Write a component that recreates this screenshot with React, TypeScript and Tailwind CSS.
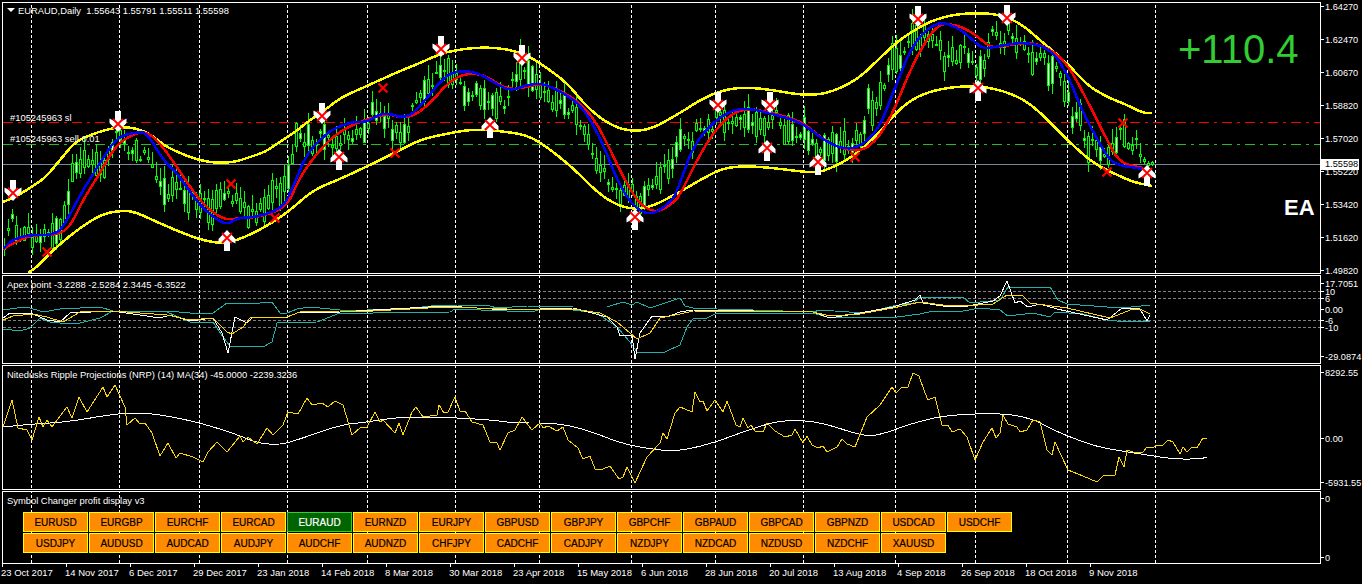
import React from "react";

type P = [number, number];
const GRID = [31, 119, 199, 287, 367, 455, 539, 631, 715, 803, 895, 975, 1067, 1155];

const upper: P[] = [[3,202],[15,197],[30,188],[45,178],[60,160],[75,142],[90,135],[105,130],[120,127],[135,128],[150,134],[165,146],[180,153],[195,159],[215,163],[235,162],[250,157],[265,152],[280,142],[295,132],[310,120],[325,110],[340,98],[360,89],[380,80],[400,71],[420,63],[433,57],[450,51],[480,47],[507,49],[527,55],[547,68],[567,83],[587,107],[607,123],[627,131],[650,130],[680,113],[700,100],[720,91],[743,87],[773,90],[800,95],[827,94],[857,80],[880,58],[897,42],[913,31],[933,20],[957,14],[983,13],[1000,15],[1020,23],[1040,40],[1067,63],[1087,85],[1107,97],[1127,105],[1143,113],[1152,113]];
const lower: P[] = [[28,273],[37,267],[53,250],[77,230],[100,215],[117,211],[133,211],[157,222],[187,235],[213,243],[233,242],[260,230],[287,213],[313,190],[340,179],[370,165],[400,150],[420,140],[440,135],[473,129],[500,131],[527,135],[547,147],[573,168],[600,195],[623,208],[647,209],[680,192],[700,180],[723,168],[747,166],[773,168],[813,173],[827,170],[853,157],[880,132],[900,108],[923,93],[957,86],[990,87],[1020,97],[1040,112],[1067,140],[1093,163],[1113,173],[1133,182],[1152,186]];
const red: P[] = [[3,249],[20,240],[33,235],[57,235],[70,227],[83,200],[100,173],[113,150],[123,140],[137,133],[147,132],[160,143],[177,167],[197,197],[213,213],[227,220],[240,218],[260,217],[287,207],[300,177],[317,153],[340,130],[383,113],[407,119],[427,107],[453,77],[480,72],[507,90],[527,87],[543,83],[573,97],[593,117],[607,143],[623,177],[640,205],[657,213],[673,203],[680,195],[697,160],[713,133],[730,115],[747,108],[773,113],[803,122],[820,137],[837,147],[860,152],[877,140],[893,113],[913,63],[937,23],[957,25],[973,33],[990,47],[1000,47],[1027,42],[1047,47],[1067,63],[1087,100],[1107,140],[1120,163],[1143,168]];
const blue: P[] = [[3,249],[12,240],[27,235],[57,235],[67,220],[83,190],[100,163],[117,137],[137,132],[147,133],[163,160],[177,173],[197,202],[213,217],[227,225],[237,218],[257,217],[283,208],[293,187],[307,153],[327,133],[340,126],[353,122],[367,122],[383,112],[407,119],[423,103],[443,78],[457,71],[477,72],[503,88],[513,90],[527,85],[543,83],[567,95],[583,108],[600,137],[620,187],[637,210],[653,215],[673,200],[680,183],[693,147],[710,125],[730,111],[747,108],[773,114],[803,123],[827,143],[853,151],[877,133],[893,93],[913,43],[937,21],[957,27],[973,40],[983,49],[1000,46],[1023,42],[1050,48],[1067,73],[1083,113],[1107,157],[1117,165],[1143,169]];
const guide: P[] = [[4,250],[12,212],[16,228],[20,236],[30,235],[50,236],[60,230],[65,215],[70,178],[80,165],[90,165],[100,170],[110,150],[118,130],[130,155],[145,155],[155,170],[165,190],[180,190],[195,200],[205,205],[215,205],[230,195],[235,195],[245,210],[255,210],[265,205],[272,190],[285,190],[290,165],[295,138],[305,140],[315,140],[325,135],[340,143],[347,133],[353,138],[367,127],[372,110],[380,108],[392,130],[400,137],[407,132],[412,107],[420,93],[427,95],[432,83],[440,65],[443,65],[452,80],[460,83],[463,97],[472,92],[480,93],[488,98],[492,105],[500,100],[507,100],[513,82],[520,72],[527,75],[535,82],[543,90],[548,97],[553,105],[560,105],[567,112],[575,115],[583,127],[588,140],[595,157],[603,173],[610,183],[617,190],[623,197],[632,190],[635,197],[643,200],[648,183],[657,177],[668,170],[675,153],[680,143],[692,140],[695,127],[703,130],[712,128],[717,113],[727,120],[735,127],[747,122],[752,130],[763,127],[768,120],[777,115],[780,130],[790,128],[803,132],[812,143],[823,154],[835,147],[850,148],[860,137],[863,127],[868,103],[875,110],[883,90],[892,63],[900,60],[912,40],[923,35],[933,38],[939,47],[943,65],[952,60],[963,47],[972,63],[976,75],[983,63],[992,27],[1003,43],[1007,28],[1012,37],[1023,50],[1028,57],[1032,57],[1043,55],[1047,67],[1052,70],[1060,77],[1063,88],[1068,100],[1072,117],[1080,120],[1083,133],[1087,143],[1095,147],[1100,150],[1107,157],[1115,147],[1119,133],[1123,130],[1127,140],[1132,142],[1135,142],[1139,147],[1143,158],[1147,164],[1152,163]];

const tealUp: P[] = [[3,310],[17,308],[27,307],[43,312],[60,309],[80,308],[100,307],[113,311],[167,311],[190,313],[213,313],[227,303],[260,303],[272,302],[280,313],[287,313],[297,309],[310,307],[340,310],[367,310],[413,308],[440,305],[457,305],[490,306],[497,308],[527,306],[573,307],[607,307],[623,302],[632,305],[637,302],[650,308],[680,298],[685,306],[693,308],[717,309],[753,310],[813,312],[820,310],[863,313],[877,310],[893,306],[913,303],[920,297],[963,297],[970,303],[1000,300],[1008,287],[1050,287],[1058,300],[1067,304],[1107,307],[1122,308],[1150,305]];
const tealLo: P[] = [[3,329],[20,331],[30,328],[40,318],[50,322],[60,323],[80,323],[100,318],[113,311],[167,312],[190,322],[213,322],[223,337],[230,346],[263,347],[272,342],[277,323],[317,322],[340,313],[373,313],[450,312],[455,309],[533,312],[540,309],[573,310],[597,313],[617,327],[630,342],[637,352],[665,352],[680,345],[687,327],[693,319],[707,318],[717,313],[813,313],[827,317],[897,317],[920,314],[933,311],[963,311],[980,308],[1000,310],[1008,316],[1033,313],[1050,317],[1055,312],[1083,314],[1107,320],[1127,322],[1150,321]];
const apexGold: P[] = [[3,320],[13,316],[33,314],[47,317],[63,322],[80,312],[113,311],[167,315],[190,320],[213,318],[227,332],[232,334],[243,327],[250,318],[287,317],[300,312],[340,311],[373,311],[447,307],[507,309],[573,309],[600,313],[617,322],[630,333],[637,339],[650,333],[660,318],[680,314],[693,311],[813,312],[830,316],[860,314],[893,308],[920,302],[943,305],[963,306],[993,304],[1007,295],[1022,295],[1030,303],[1067,308],[1110,318],[1133,309],[1142,310],[1150,314]];
const apexWhite: P[] = [[3,318],[10,313],[33,314],[47,320],[60,322],[70,313],[113,311],[160,318],[170,315],[190,321],[213,318],[222,333],[228,353],[235,317],[247,323],[253,317],[287,317],[300,312],[340,312],[373,310],[447,306],[507,310],[573,308],[607,317],[617,327],[620,336],[632,335],[635,359],[640,333],[652,316],[667,317],[680,312],[693,310],[813,312],[830,318],[860,313],[893,307],[915,300],[920,295],[923,303],[943,306],[963,307],[993,301],[1000,296],[1007,281],[1015,303],[1020,301],[1028,307],[1040,304],[1057,309],[1107,320],[1122,308],[1140,309],[1147,321],[1150,315]];

const nrpWhite: P[] = [[3,427],[33,424],[67,422],[120,413],[147,413],[173,417],[200,423],[233,433],[257,443],[280,445],[300,439],[340,425],[367,422],[400,417],[440,417],[493,420],[513,423],[557,423],[587,430],[623,444],[657,450],[680,451],[713,443],[740,433],[773,422],[797,420],[823,423],[863,436],[880,435],[913,423],[947,415],[1003,413],[1033,419],[1053,430],[1083,442],[1103,448],[1147,455],[1173,459],[1200,459],[1207,457]];
const nrpGold: P[] = [[3,427],[12,400],[18,428],[27,430],[32,440],[39,417],[43,427],[47,420],[52,427],[67,407],[72,418],[79,397],[87,412],[103,387],[107,397],[115,385],[125,407],[127,425],[135,418],[140,424],[145,423],[152,433],[160,456],[168,443],[176,458],[180,453],[193,457],[203,462],[208,452],[217,442],[227,452],[240,436],[243,442],[248,437],[257,444],[267,428],[273,435],[283,425],[288,412],[298,414],[307,398],[312,405],[322,403],[328,407],[335,401],[343,405],[352,435],[360,428],[367,427],[375,412],[380,422],[383,420],[395,433],[399,423],[403,435],[412,412],[416,407],[423,417],[437,415],[439,405],[444,413],[448,412],[455,397],[460,411],[465,411],[472,422],[483,425],[490,442],[497,443],[500,450],[508,433],[515,430],[522,417],[532,430],[540,423],[543,428],[548,426],[557,431],[563,427],[568,440],[578,448],[583,459],[590,456],[595,469],[603,469],[610,466],[619,479],[623,477],[627,467],[635,483],[647,457],[660,443],[663,433],[667,439],[675,413],[680,407],[692,412],[695,392],[700,402],[703,401],[707,411],[715,400],[723,412],[727,401],[736,425],[740,427],[743,418],[748,428],[751,425],[755,431],[763,432],[767,423],[775,431],[785,437],[792,435],[795,429],[803,443],[807,436],[812,445],[818,448],[823,446],[827,452],[837,447],[842,439],[847,444],[855,447],[867,417],[880,405],[892,387],[896,393],[902,387],[908,387],[913,373],[919,376],[925,393],[928,400],[935,397],[942,425],[948,425],[952,432],[960,429],[967,437],[975,460],[983,442],[992,428],[996,438],[1000,433],[1003,415],[1008,424],[1017,427],[1020,432],[1027,430],[1033,420],[1040,422],[1047,450],[1052,455],[1055,442],[1068,470],[1083,476],[1097,482],[1103,476],[1115,475],[1119,457],[1124,467],[1127,450],[1133,452],[1143,452],[1147,447],[1152,448],[1157,445],[1163,445],[1168,440],[1173,442],[1180,454],[1183,447],[1187,452],[1192,447],[1197,448],[1203,438],[1207,438]];

const downArrows: P[] = [[13,193],[118,124],[322,116],[441,49],[522,58],[718,105],[770,105],[918,19],[1007,18]];
const upArrows: P[] = [[227,238],[339,157],[490,125],[635,217],[767,148],[818,162],[978,88],[1147,173]];
const crosses: P[] = [[231,184],[47,252],[275,218],[383,88],[395,153],[855,157],[1123,123],[1107,172]];

function smooth(p: P[], n = 3): P[] {
  let out = p;
  for (let k = 0; k < n; k++) {
    const next: P[] = [out[0]];
    for (let i = 0; i < out.length - 1; i++) {
      const [a, b] = out[i];
      const [c, d] = out[i + 1];
      next.push([a * 0.75 + c * 0.25, b * 0.75 + d * 0.25], [a * 0.25 + c * 0.75, b * 0.25 + d * 0.75]);
    }
    next.push(out[out.length - 1]);
    out = next;
  }
  return out;
}
const pts = (p: P[]) => p.map((q) => q.join(",")).join(" ");
function rnd(i: number) {
  const v = Math.sin(i * 12.9898 + 4.1) * 43758.5453;
  return v - Math.floor(v);
}
function at(x: number) {
  for (let i = 1; i < guide.length; i++) {
    if (x <= guide[i][0]) {
      const [a, b] = guide[i - 1];
      const [c, d] = guide[i];
      return b + ((d - b) * (x - a)) / Math.max(c - a, 1);
    }
  }
  return guide[guide.length - 1][1];
}
const candles = Array.from({ length: 288 }, (_, k) => {
  const x = 1152 - 4 * (287 - k);
  const tail = k >= 285;
  const center = at(x) + (tail ? 0 : (rnd(k) - 0.5) * 14);
  const half = tail ? 1 : 0.5 + Math.pow(rnd(k + 1000), 2) * 13;
  const top = Math.round(center - half);
  const bot = Math.round(center + half);
  return {
    x,
    top,
    bot,
    hi: Math.max(top - Math.round(1 + rnd(k + 300) * (tail ? 3 : 13)), 3),
    lo: Math.min(bot + Math.round(1 + rnd(k + 700) * (tail ? 3 : 10)), 272),
    white: rnd(k + 1500) < 0.25,
  };
}).filter((d) => d.x >= 4);

function Grid() {
  return (
    <>
      {GRID.map((x) => (
        <line key={x} x1={x + 0.5} x2={x + 0.5} y1={0} y2={584} stroke="#ffffff" strokeDasharray="3 2" shapeRendering="crispEdges" />
      ))}
    </>
  );
}

function Candles() {
  return (
    <g shapeRendering="crispEdges">
      {candles.map((d) => (
        <g key={d.x}>
          <line x1={d.x + 0.5} x2={d.x + 0.5} y1={d.hi} y2={d.lo} stroke="#00ff00" />
          <rect x={d.x - 0.5} y={d.top + 0.5} width={2} height={Math.max(d.bot - d.top, 1)} fill={d.white ? "#ffffff" : "#000000"} stroke="#00ff00" />
        </g>
      ))}
    </g>
  );
}

function Line({ p, c, w = 1 }: { p: P[]; c: string; w?: number }) {
  return <polyline points={pts(p)} fill="none" stroke={c} strokeWidth={w} shapeRendering="crispEdges" strokeLinejoin="round" />;
}

function Cross({ x, y, r = 4.5, w = 2.2 }: { x: number; y: number; r?: number; w?: number }) {
  return <path d={`M${x - r} ${y - r}L${x + r} ${y + r}M${x + r} ${y - r}L${x - r} ${y + r}`} stroke="#ff0000" strokeWidth={w} />;
}
function Arrow({ x, y, down }: { x: number; y: number; down?: boolean }) {
  const s = down ? -1 : 1;
  const d = [[0, -8], [8.5, 1], [8.5, 5.5], [3, 2.5], [3, 13], [-3, 13], [-3, 2.5], [-8.5, 5.5], [-8.5, 1]]
    .map(([a, b]) => `${x + a},${y + b * s}`)
    .join(" ");
  return (
    <>
      <polygon points={d} fill="#ffffff" />
      <Cross x={x} y={y} r={5} w={1.9} />
    </>
  );
}

function ChartSvg({ top, h, children }: { top: number; h: number; children?: React.ReactNode }) {
  return (
    <svg className="absolute inset-0 block" width={1317} height={h} viewBox={`3 ${top} 1317 ${h}`}>
      <Grid />
      {children}
    </svg>
  );
}

function Label({ className, children }: { className: string; children: React.ReactNode }) {
  return <div className={`absolute whitespace-pre text-[9.4px] leading-[12px] text-white ${className}`}>{children}</div>;
}

function Axis({ h, offset, ticks, children }: { h: number; offset: number; ticks: [string, number][]; children?: React.ReactNode }) {
  return (
    <div className="relative w-[41px]" style={{ height: h }}>
      {ticks.map(([t, y]) => (
        <React.Fragment key={t + y}>
          <div className="absolute left-0 h-px w-[3px] bg-white" style={{ top: y - offset }} />
          <div className="absolute left-[4px] text-[9.2px] leading-[12px] whitespace-pre text-white" style={{ top: y - offset - 5 }}>{t}</div>
        </React.Fragment>
      ))}
      {children}
    </div>
  );
}

const PRICES: [string, number][] = [["1.64270", 6], ["1.62470", 39], ["1.60670", 72], ["1.58820", 105], ["1.57020", 138], ["1.55220", 171], ["1.53420", 204], ["1.51620", 237], ["1.49820", 270]];
const APEX: [string, number][] = [["17.7051", 283], ["10", 291], ["6", 298], ["0.00", 309], ["-6", 320], ["-10", 327], ["-29.0874", 356]];
const NRP: [string, number][] = [["8292.55", 372], ["0.00", 438], ["-5931.55", 482]];
const CHANGER: [string, number][] = [["0", 498], ["0", 557]];

const SYMBOLS = ["EURUSD","EURGBP","EURCHF","EURCAD","EURAUD","EURNZD","EURJPY","GBPUSD","GBPJPY","GBPCHF","GBPAUD","GBPCAD","GBPNZD","USDCAD","USDCHF","USDJPY","AUDUSD","AUDCAD","AUDJPY","AUDCHF","AUDNZD","CHFJPY","CADCHF","CADJPY","NZDJPY","NZDCAD","NZDUSD","NZDCHF","XAUUSD"];
const DATES = ["23 Oct 2017","14 Nov 2017","6 Dec 2017","29 Dec 2017","23 Jan 2018","14 Feb 2018","8 Mar 2018","30 Mar 2018","23 Apr 2018","15 May 2018","6 Jun 2018","28 Jun 2018","20 Jul 2018","13 Aug 2018","4 Sep 2018","26 Sep 2018","18 Oct 2018","9 Nov 2018"];

export default function App() {
  return (
    <div className="flex h-[584px] w-[1362px] flex-col overflow-hidden bg-black pl-[2px] pt-[2px] font-['Liberation_Sans',sans-serif]">
      {/* Main price pane */}
      <div className="flex">
        <div className="relative h-[272px] w-[1319px] border border-white">
          <ChartSvg top={3} h={270}>
            <line x1={3} x2={1320} y1={122.5} y2={122.5} stroke="#ff0000" strokeDasharray="10 5 3 5" shapeRendering="crispEdges" />
            <line x1={3} x2={1320} y1={144.5} y2={144.5} stroke="#22c022" strokeDasharray="10 5 3 5" shapeRendering="crispEdges" />
            <line x1={3} x2={1320} y1={164.5} y2={164.5} stroke="#778899" shapeRendering="crispEdges" />
            <Candles />
            <Line p={smooth(upper)} c="#ffff00" w={2.5} />
            <Line p={smooth(lower)} c="#ffff00" w={2.5} />
            <Line p={smooth(red, 2)} c="#ff0000" w={2.5} />
            <Line p={smooth(blue, 2)} c="#0000ff" w={2.5} />
            {downArrows.map(([x, y]) => <Arrow key={x} x={x} y={y} down />)}
            {upArrows.map(([x, y]) => <Arrow key={x} x={x} y={y} />)}
            {crosses.map(([x, y]) => <Cross key={x} x={x} y={y} />)}
          </ChartSvg>
          <div className="absolute left-[4px] top-[5px] h-0 w-0 border-x-[4px] border-t-[4px] border-x-transparent border-t-white" />
          <Label className="left-[15px] top-[2px]">EURAUD,Daily  1.55643 1.55791 1.55511 1.55598</Label>
          <Label className="left-[7px] top-[109px]">#105245963 sl</Label>
          <Label className="left-[7px] top-[130px]">#105245963 sell 0.01</Label>
          <div className="absolute left-[1175px] top-[23px] text-[40px] leading-[46px] text-[#32cd32]">+110.4</div>
          <div className="absolute left-[1281px] top-[193px] text-[22px] font-bold leading-[24px] text-white">EA</div>
        </div>
        <Axis h={272} offset={2} ticks={PRICES}>
          <div className="absolute left-0 top-[157px] h-[11px] w-[38px] bg-white pl-[4px] text-[9.2px] leading-[11px] text-black">1.55598</div>
        </Axis>
      </div>

      {/* Apex point */}
      <div className="mt-px flex">
        <div className="relative h-[89px] w-[1319px] border border-white">
          <ChartSvg top={276} h={87}>
            {[291, 298, 320, 327].map((y) => (
              <line key={y} x1={3} x2={1320} y1={y + 0.5} y2={y + 0.5} stroke="#808080" strokeDasharray="3 2" shapeRendering="crispEdges" />
            ))}
            <Line p={tealUp} c="#20b2aa" />
            <Line p={tealLo} c="#20b2aa" />
            <Line p={apexWhite} c="#ffffff" />
            <Line p={apexGold} c="#ffd700" />
          </ChartSvg>
          <Label className="left-[4px] top-[3px]">Apex point -3.2288 -2.5284 2.3445 -6.3522</Label>
        </div>
        <Axis h={89} offset={275} ticks={APEX} />
      </div>

      {/* NRP */}
      <div className="mt-px flex">
        <div className="relative h-[125px] w-[1319px] border border-white">
          <ChartSvg top={366} h={123}>
            <Line p={smooth(nrpWhite, 2)} c="#ffffff" />
            <Line p={nrpGold} c="#ffd700" />
          </ChartSvg>
          <Label className="left-[4px] top-[3px]">Nitedusks Ripple Projections (NRP) (14) MA(34) -45.0000 -2239.3236</Label>
        </div>
        <Axis h={125} offset={365} ticks={NRP} />
      </div>

      {/* Symbol changer */}
      <div className="mt-px flex">
        <div className="relative h-[73px] w-[1319px] border border-white">
          <ChartSvg top={492} h={71} />
          <div className="relative pl-[20px] pt-[3px]">
            <div className="-ml-[16px] h-[17px] text-[9.4px] leading-[12px] whitespace-pre text-white">Symbol Changer profit display v3</div>
            <div className="flex w-[1000px] flex-wrap gap-px">
              {SYMBOLS.map((s) => {
                const active = s === "EURAUD";
                return (
                  <div
                    key={s}
                    className={active
                      ? "flex h-[20px] w-[65px] items-center justify-center border border-[#32cd32] bg-[#006400] text-[10px] text-white [-webkit-text-stroke:0.2px_#ffffff]"
                      : "flex h-[20px] w-[65px] items-center justify-center border border-[#ffff00] bg-[#ff8c00] text-[10px] text-black [-webkit-text-stroke:0.2px_#000000]"}
                  >
                    {s}
                  </div>
                );
              })}
            </div>
          </div>
        </div>
        <Axis h={73} offset={491} ticks={CHANGER} />
      </div>

      {/* Time axis */}
      <div className="-ml-px flex">
        {DATES.map((d) => (
          <div key={d} className="relative h-[18px] w-[64px] whitespace-pre pt-[3px] text-[9.5px] leading-[12px] text-white">
            <div className="absolute left-px top-0 h-[3px] w-px bg-white" />
            {d}
          </div>
        ))}
      </div>
    </div>
  );
}
